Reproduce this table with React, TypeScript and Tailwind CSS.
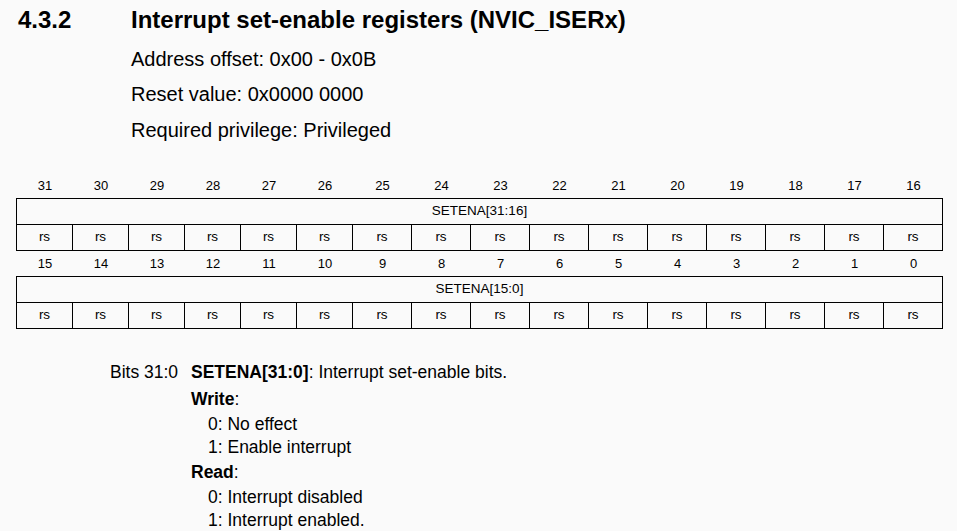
import React from "react";

const topBits = Array.from({ length: 16 }, (_, i) => 31 - i);
const botBits = Array.from({ length: 16 }, (_, i) => 15 - i);

function NumberRow({ bits, h }: { bits: number[]; h: string }) {
  return (
    <div className={`grid grid-cols-[repeat(6,56px)_repeat(10,59px)] pl-[1px] ${h}`}>
      {bits.map((b) => (
        <div key={b} className="flex items-end justify-center pb-[5px] text-[13px] leading-[15px]">
          {b}
        </div>
      ))}
    </div>
  );
}

function RegBox({ label }: { label: string }) {
  return (
    <div className="border-l border-t border-black w-[927px]">
      <div className="grid grid-cols-[repeat(6,56px)_repeat(10,59px)]">
        <div className="col-span-16 h-[26px] border-r border-b border-black flex items-center justify-center text-[13.5px]">
          {label}
        </div>
        {Array.from({ length: 16 }, (_, i) => (
          <div
            key={i}
            className="h-[26px] border-r border-b border-black flex items-center justify-center text-[13.5px]"
          >
            rs
          </div>
        ))}
      </div>
    </div>
  );
}

export default function App() {
  return (
    <div
      className="w-[957px] h-[531px] bg-[#fafafa] text-black overflow-hidden"
      style={{ fontFamily: '"Liberation Sans", Arial, sans-serif' }}
    >
      <div className="flex pt-[5px] h-[32px] leading-[30px] text-[24px] font-bold">
        <div className="pl-[18px] w-[131px]">4.3.2</div>
        <div>Interrupt set-enable registers (NVIC_ISERx)</div>
      </div>
      <div className="pl-[131px] pt-[10px] text-[20px]">
        <div className="h-[35px] leading-[35px]">Address offset: 0x00 - 0x0B</div>
        <div className="h-[36px] leading-[35px]">Reset value: 0x0000 0000</div>
        <div className="h-[35px] leading-[35px]">Required privilege: Privileged</div>
      </div>
      <div className="ml-[16px] mt-[24px]">
        <NumberRow bits={topBits} h="h-[26px]" />
        <RegBox label="SETENA[31:16]" />
        <NumberRow bits={botBits} h="h-[25px]" />
        <RegBox label="SETENA[15:0]" />
      </div>
      <div className="flex pl-[110px] pt-[32px] text-[17.5px] leading-[23px]">
        <div className="w-[81px]">Bits 31:0</div>
        <div>
          <div>
            <span className="font-bold">SETENA[31:0]</span>: Interrupt set-enable bits.
          </div>
          <div className="mt-[4px]">
            <span className="font-bold">Write</span>:
          </div>
          <div className="pl-[17px] mt-[2px]">0: No effect</div>
          <div className="pl-[17px]">1: Enable interrupt</div>
          <div className="mt-[2px]">
            <span className="font-bold">Read</span>:
          </div>
          <div className="pl-[17px] mt-[2px]">0: Interrupt disabled</div>
          <div className="pl-[17px]">1: Interrupt enabled.</div>
        </div>
      </div>
    </div>
  );
}
